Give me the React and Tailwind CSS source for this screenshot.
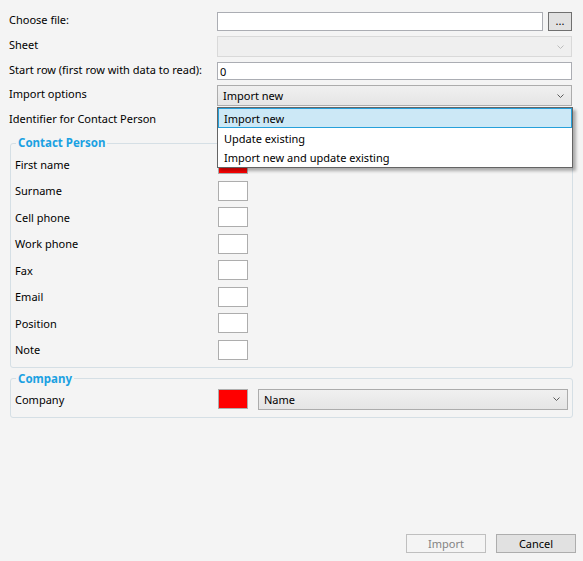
import React from 'react';

const font = { fontFamily: '"Noto Sans", "Open Sans", sans-serif' };

function Chevron({ disabled }) {
  return (
    <svg width="7" height="4" viewBox="0 0 7 4" className="shrink-0">
      <path d="M0.5 0.5 L3.5 3.5 L6.5 0.5" fill="none" stroke={disabled ? '#bcbcbc' : '#5a5a5a'} strokeWidth="1" />
    </svg>
  );
}

function Combo({ value, disabled, className = '' }) {
  return (
    <div
      className={
        'flex items-center justify-between pl-[5px] pr-[7px] border ' +
        (disabled
          ? 'bg-[#efefef] border-[#d9d9d9] text-[#838383] '
          : 'bg-gradient-to-b from-[#f0f0f0] to-[#e5e5e5] border-[#acacac] text-black ') +
        className
      }
    >
      <span className="leading-none whitespace-nowrap">{value}</span>
      <Chevron disabled={disabled} />
    </div>
  );
}

function FormRow({ label, children, className = '' }) {
  return (
    <div className={'flex items-center ' + className}>
      <div className="w-[208px] shrink-0 leading-none whitespace-nowrap mb-[4px]">{label}</div>
      <div className="flex-1 flex items-center gap-[5px] h-full">{children}</div>
    </div>
  );
}

function Swatch({ red }) {
  return (
    <div
      className={
        'w-[30px] h-[20px] border border-[#adadad] shrink-0 ' + (red ? 'bg-[#ff0000]' : 'bg-white')
      }
    />
  );
}

const contactFields = ['First name', 'Surname', 'Cell phone', 'Work phone', 'Fax', 'Email', 'Position', 'Note'];

export default function App() {
  return (
    <div
      className="relative w-[583px] h-[561px] bg-[#f4f4f4] text-[11px] text-black flex flex-col overflow-hidden"
      style={font}
    >
      {/* Top form */}
      <div className="pt-[12px] pl-[9px] pr-[11px] flex flex-col">
        <FormRow label="Choose file:" className="h-[19px]">
          <div className="flex-1 h-full bg-white border border-[#abadb3]" />
          <button className="w-[24px] h-full bg-[#e1e1e1] border border-[#707070] text-[11px] leading-none flex items-end justify-center pb-[4px]">
            ...
          </button>
        </FormRow>
        <FormRow label="Sheet" className="h-[21px] mt-[5px]">
          <Combo value="" disabled className="flex-1 h-full" />
        </FormRow>
        <FormRow label="Start row (first row with data to read):" className="h-[18px] mt-[5px]">
          <div className="flex-1 h-full bg-white border border-[#abadb3] pl-[2px] flex items-center leading-none">
            0
          </div>
        </FormRow>
        <FormRow label="Import options" className="h-[21px] mt-[5px]">
          <Combo value="Import new" className="flex-1 h-full" />
        </FormRow>
        <FormRow label="Identifier for Contact Person" className="h-[21px] mt-[4px]">
          <Combo value="" className="flex-1 h-full" />
        </FormRow>
      </div>

      {/* Contact Person group */}
      <fieldset className="mx-[10px] mt-[4px] border border-[#d5dfe5] rounded-[3px] pl-[4px] pr-[4px] pb-[7px]">
        <legend className="ml-[1px] px-[2px] font-bold text-[11.5px] text-[#1ba1e2] leading-[16px]">Contact Person</legend>
        <div className="flex flex-col gap-[6.5px] pt-[3px]">
          {contactFields.map((f, i) => (
            <div key={f} className="flex items-center h-[20px]">
              <div className="w-[203px] shrink-0 leading-none">{f}</div>
              <Swatch red={i === 0} />
            </div>
          ))}
        </div>
      </fieldset>

      {/* Company group */}
      <fieldset className="mx-[10px] mt-[3px] border border-[#d5dfe5] rounded-[3px] pl-[4px] pr-[4px] pb-[7px]">
        <legend className="ml-[1px] px-[2px] font-bold text-[11.5px] text-[#1ba1e2] leading-[16px]">Company</legend>
        <div className="flex items-center h-[21px] mt-[2px]">
          <div className="w-[203px] shrink-0 leading-none">Company</div>
          <Swatch red />
          <Combo value="Name" className="ml-[10px] flex-1 h-[21px]" />
        </div>
      </fieldset>

      {/* Buttons */}
      <div className="mt-auto flex justify-end gap-[10px] pr-[7px] pb-[8px]">
        <button className="w-[80px] h-[19px] border border-[#bfbfbf] bg-[#f4f4f4] text-[#838383] leading-none">
          Import
        </button>
        <button className="w-[80px] h-[19px] border border-[#adadad] bg-[#e1e1e1] text-black leading-none">
          Cancel
        </button>
      </div>

      {/* Dropdown popup */}
      <div className="absolute left-[217px] top-[107px] w-[356px] bg-white border border-[#646464] shadow-[3px_3px_3px_rgba(0,0,0,0.3)] flex flex-col">
        <div className="h-[20px] bg-[#cce8f6] border border-[#26a0da] pl-[5px] flex items-center leading-none">
          Import new
        </div>
        <div className="h-[20px] pl-[6px] flex items-center leading-none">Update existing</div>
        <div className="h-[19px] pl-[6px] flex items-center leading-none">Import new and update existing</div>
      </div>
    </div>
  );
}
